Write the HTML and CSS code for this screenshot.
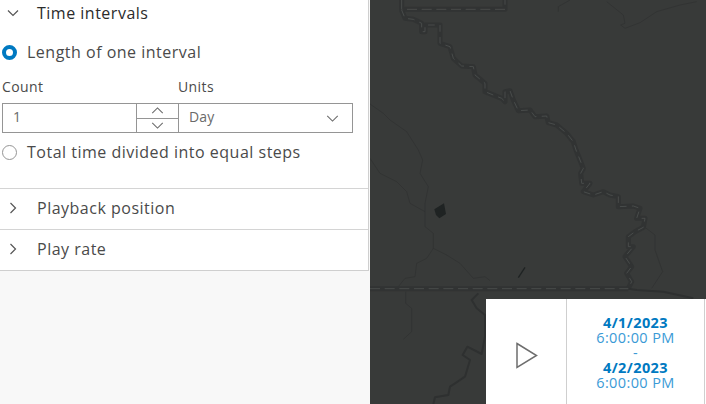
FILE: index.html
```html
<!DOCTYPE html>
<html lang="en">
<head>
<meta charset="utf-8">
<title>Time slider settings</title>
<link rel="stylesheet" href="styles.css">
</head>
<body>
<div class="page">
  <aside class="side">
    <div class="panel">
      <section class="block open">
        <div class="head">
          <svg class="chev" viewBox="0 0 12 12"><path d="M1 3.5l5 5 5-5"/></svg>
          <span class="title dark">Time intervals</span>
        </div>
        <div class="radio-row first">
          <span class="radio on"></span>
          <span class="radio-label dark">Length of one interval</span>
        </div>
        <div class="fields">
          <div class="field count">
            <label class="lbl">Count</label>
            <div class="box countbox">
              <span class="val">1</span>
              <div class="stepper">
                <span class="step"><svg class="mini" viewBox="0 0 14 8"><path d="M1 7l6-6 6 6"/></svg></span>
                <span class="step lower"><svg class="mini" viewBox="0 0 14 8"><path d="M1 1l6 6 6-6"/></svg></span>
              </div>
            </div>
          </div>
          <div class="field units">
            <label class="lbl">Units</label>
            <div class="box unitbox">
              <span class="unit">Day</span>
              <svg class="mini sel" viewBox="0 0 14 8"><path d="M1 1l6 6 6-6"/></svg>
            </div>
          </div>
        </div>
        <div class="radio-row second">
          <span class="radio"></span>
          <span class="radio-label">Total time divided into equal steps</span>
        </div>
      </section>
      <section class="block">
        <div class="head closed">
          <svg class="chev" viewBox="0 0 12 12"><path d="M3.5 1l5 5-5 5"/></svg>
          <span class="title">Playback position</span>
        </div>
      </section>
      <section class="block">
        <div class="head closed">
          <svg class="chev" viewBox="0 0 12 12"><path d="M3.5 1l5 5-5 5"/></svg>
          <span class="title">Play rate</span>
        </div>
      </section>
    </div>
  </aside>
  <main class="map">
    <svg class="mapart" viewBox="0 0 1008 1212">
      <defs>
        <path id="river" d="M95 30L105 55 130 58 155 70 155 95 165 95 165 75 210 75 210 130 240 140 250 175 275 198 310 200 315 225 345 250 345 275 395 295 405 305 405 275 420 272 430 300 445 332 480 330 495 350 530 348 535 368 560 375 590 400 610 425 618 450 630 480 640 505 632 520 635 550 660 550 640 575 670 585 700 575 720 585 745 590 745 620 790 618 810 625 800 655 825 655 820 682 795 695 775 710 775 740 790 740 765 770 785 800 770 820 785 845 775 865"/>
        <path id="top" d="M95 0L95 28 405 28 405 0"/>
        <path id="south" d="M0 866L775 866"/>
      </defs>
      <g class="thin">
        <path d="M565 35L565 20 600 0"/>
        <path d="M710 5L760 45 765 70 752 75 765 85 810 68 860 35 930 15 980 5"/>
        <path d="M0 312L40 340 60 360 110 395 145 450 158 480 150 520 175 560 165 610 165 680 190 700 190 745 230 765 270 790 310 835 345 830 360 842"/>
        <path d="M0 475L30 520 80 545 110 575 120 610 165 635"/>
        <path d="M190 745L170 775 140 790 135 830 105 835 85 860"/>
        <path d="M107 875L107 910 125 925 125 995 100 1018"/>
        <path d="M825 682L855 705 855 750 878 815 845 865"/>
      </g>
      <g class="band">
        <use href="#river"/><use href="#top"/><use href="#south"/>
        <path class="b2" d="M325 880L305 900 320 925 345 945 345 1010 335 1062 292 1040 278 1065 300 1080 285 1130 255 1150 240 1160 235 1185 195 1192 190 1212"/>
        <path class="b2" d="M775 866L800 870 880 875 970 895"/>
      </g>
      <g class="dash river-dash"><use href="#river"/></g>
      <g class="dash"><use href="#top"/><use href="#south"/></g>
      <path class="blob" d="M193 628L222 610 228 642 208 655 198 645Z"/>
      <path class="streak" d="M445 833L465 802"/>
    </svg>
    <div class="player">
      <div class="play">
        <svg class="tri" viewBox="0 0 22 27"><path d="M1 1.500L20.500 13.500 1 25.500Z"/></svg>
      </div>
      <div class="times">
        <div class="d">4/1/2023</div>
        <div class="t">6:00:00 PM</div>
        <div class="t">-</div>
        <div class="d">4/2/2023</div>
        <div class="t">6:00:00 PM</div>
      </div>
      <div class="end"></div>
    </div>
  </main>
</div>
</body>
</html>
```
FILE: styles.css
```css
* { box-sizing: border-box; }
html, body { margin: 0; height: 100%; overflow: hidden; }
body { font-family: "Open Sans", "Noto Sans", sans-serif; background: #f8f8f8; }
.page { display: flex; width: 706px; height: 404px; }
.side { width: 370px; flex: none; background: #f8f8f8; }
.panel { background: #fff; height: 271px; border-right: 1px solid #cfcfcf; border-bottom: 1px solid #cfcfcf; margin-right: 1px; }
.block { border-bottom: 1px solid #d4d4d4; }
.block:last-child { border-bottom: 0; }
.block.open { height: 189px; }
.head { display: flex; align-items: center; height: 26px; font-size: 16px; line-height: 22px; }
.head.closed { height: 40px; padding-bottom: 2px; }
.chev { width: 12px; height: 12px; margin-left: 7px; margin-right: 18px; fill: none; stroke: #555; stroke-width: 1.2; }
.title { color: #4a4a4a; letter-spacing: .5px; }
.dark { color: #2b2b2b; }
.radio-row { display: flex; align-items: center; font-size: 16px; height: 22px; letter-spacing: .5px; }
.radio-row.first { margin-top: 15px; }
.radio-row.second { margin-top: 8px; }
.radio { width: 15px; height: 15px; margin-left: 2px; margin-right: 10px; border-radius: 50%; border: 1px solid #959595; background: #fff; flex: none; }
.radio.on { border: 4px solid #0079c1; }
.radio-label { color: #4a4a4a; }
.fields { display: flex; margin-top: 15px; padding-left: 2px; }
.field { display: flex; flex-direction: column; }
.count { width: 177px; }
.units { width: 175px; margin-left: -1px; }
.lbl { font-size: 14px; line-height: 17px; color: #4a4a4a; margin-bottom: 8px; letter-spacing: .4px; }
.box { display: flex; align-items: center; height: 30px; border: 1px solid #959595; background: #fff; }
.val { flex: 1; padding: 0 0 4px 10px; font-size: 14px; color: #6a6a6a; }
.stepper { width: 42px; height: 100%; border-left: 1px solid #959595; display: flex; flex-direction: column; }
.step { flex: 1; display: flex; align-items: center; justify-content: center; }
.step.lower { border-top: 1px solid #959595; }
.mini { width: 13px; height: 7px; fill: none; stroke: #6a6a6a; stroke-width: 1.2; }
.unitbox { justify-content: space-between; padding: 0 13px 0 10px; }
.unit { font-size: 14px; color: #6a6a6a; padding-bottom: 4px; letter-spacing: .2px; }
.map { position: relative; flex: 1; background: #383a39; overflow: hidden; }
.mapart { position: absolute; left: 0; top: 0; width: 336px; height: 404px; }
.mapart path, .mapart use { fill: none; }
.thin { stroke: #2f3131; stroke-width: 2; fill: none; }
.band { stroke: #313333; stroke-width: 15; fill: none; stroke-linejoin: round; }
.band .b2 { stroke: #2e3030; stroke-width: 6; }
.dash { stroke: #4d504f; stroke-width: 2.500; fill: none; stroke-dasharray: 30 14; }
.river-dash { stroke-dasharray: 20 16; }
.mapart .blob { fill: #1f2323; }
.mapart .streak { stroke: #1f2323; stroke-width: 4; }
.player { position: absolute; left: 116px; top: 299px; width: 220px; height: 105px; background: #fff; display: flex; }
.play { width: 81px; display: flex; align-items: center; justify-content: center; padding: 7px 0 0 1px; border-right: 1px solid #cfcfcf; }
.tri { width: 22px; height: 27px; fill: none; stroke: #6e6e6e; stroke-width: 1.5; }
.times { width: 137px; display: flex; flex-direction: column; align-items: center; justify-content: center; font-size: 14.500px; line-height: 15px; letter-spacing: .4px; padding-top: 2px; }
.d { color: #0079c1; font-weight: 700; }
.t { color: #3a9ad6; }
.end { width: 1px; background: #cfcfcf; }
```
